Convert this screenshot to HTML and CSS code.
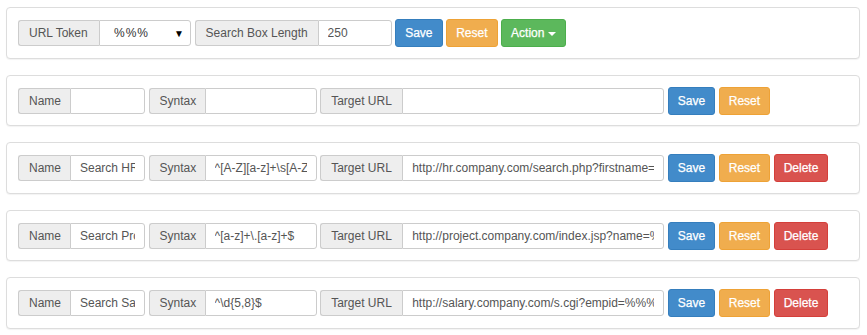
FILE: index.html
```html
<!DOCTYPE html>
<html>
<head>
<meta charset="utf-8">
<link rel="stylesheet" href="styles.css">
</head>
<body>
<div class="panel">
  <div class="row">
    <div class="group">
      <span class="addon w-token">URL Token</span>
      <div class="select"><span>%%%</span><span class="arrow">▼</span></div>
    </div>
    <div class="group">
      <span class="addon w-len">Search Box Length</span>
      <input class="field w-250" value="250">
    </div>
    <button class="btn save">Save</button>
    <button class="btn reset">Reset</button>
    <button class="btn action">Action <span class="caret"></span></button>
  </div>
</div>

<div class="panel">
  <div class="row">
    <div class="group"><span class="addon w-name">Name</span><input class="field w-nm" value=""></div>
    <div class="group"><span class="addon w-syn">Syntax</span><input class="field w-sx" value=""></div>
    <div class="group"><span class="addon w-url">Target URL</span><input class="field w-u" value=""></div>
    <button class="btn save">Save</button>
    <button class="btn reset">Reset</button>
  </div>
</div>

<div class="panel">
  <div class="row">
    <div class="group"><span class="addon w-name">Name</span><input class="field w-nm" value="Search HR"></div>
    <div class="group"><span class="addon w-syn">Syntax</span><input class="field w-sx" value="^[A-Z][a-z]+\s[A-Z][a-z]+$"></div>
    <div class="group"><span class="addon w-url">Target URL</span><input class="field w-u" value="http://hr.company.com/search.php?firstname=%%%"></div>
    <button class="btn save">Save</button>
    <button class="btn reset">Reset</button>
    <button class="btn delete">Delete</button>
  </div>
</div>

<div class="panel">
  <div class="row">
    <div class="group"><span class="addon w-name">Name</span><input class="field w-nm" value="Search Projects"></div>
    <div class="group"><span class="addon w-syn">Syntax</span><input class="field w-sx" value="^[a-z]+\.[a-z]+$"></div>
    <div class="group"><span class="addon w-url">Target URL</span><input class="field w-u" value="http://project.company.com/index.jsp?name=%%%"></div>
    <button class="btn save">Save</button>
    <button class="btn reset">Reset</button>
    <button class="btn delete">Delete</button>
  </div>
</div>

<div class="panel">
  <div class="row">
    <div class="group"><span class="addon w-name">Name</span><input class="field w-nm" value="Search Salary"></div>
    <div class="group"><span class="addon w-syn">Syntax</span><input class="field w-sx" value="^\d{5,8}$"></div>
    <div class="group"><span class="addon w-url">Target URL</span><input class="field w-u" value="http://salary.company.com/s.cgi?empid=%%%"></div>
    <button class="btn save">Save</button>
    <button class="btn reset">Reset</button>
    <button class="btn delete">Delete</button>
  </div>
</div>
</body>
</html>
```
FILE: styles.css
```css
* { box-sizing: border-box; }
html, body { background: #fff; }
body {
  margin: 0;
  padding: 7px 7px 0 6px;
  font-family: "Liberation Sans", Arial, sans-serif;
  font-size: 12px;
  color: #555;
}
.panel {
  border: 1px solid #ddd;
  border-radius: 4px;
  background: #fff;
  box-shadow: 0 1px 1px rgba(0,0,0,0.05);
  padding: 11px;
  height: 51.5px;
  margin-bottom: 16px;
}
.row {
  display: flex;
  align-items: center;
  gap: 3.6px;
  height: 28px;
}
.group {
  display: flex;
  height: 26px;
}
.addon {
  display: flex;
  align-items: center;
  padding: 0 10px;
  background: #eee;
  border: 1px solid #ccc;
  border-right: 0;
  border-radius: 3px 0 0 3px;
  color: #555;
  white-space: nowrap;
}
.field, .select {
  height: 26px;
  border: 1px solid #ccc;
  border-radius: 0 3px 3px 0;
  background: #fff;
  font-family: "Liberation Sans", Arial, sans-serif;
  font-size: 12px;
  color: #555;
  padding: 0 9px;
  margin: 0;
  outline: none;
}
.select {
  display: flex;
  align-items: center;
  justify-content: space-between;
  padding: 0 6px 0 14px;
  width: 92px;
  color: #333;
  letter-spacing: 1px;
}
.arrow { font-size: 10px; color: #000; letter-spacing: 0; }
.w-token { width: 81px; }
.w-len { width: 123px; }
.w-250 { width: 74px; }
.w-name { width: 52px; }
.w-nm { width: 75px; }
.w-syn { width: 56px; }
.w-sx { width: 112px; }
.w-url { width: 82px; }
.w-u { width: 262px; }
.btn {
  height: 28px;
  padding: 0 9px;
  border: 1px solid transparent;
  border-radius: 3px;
  font-family: "Liberation Sans", Arial, sans-serif;
  font-size: 12px;
  color: #fff;
  cursor: pointer;
  display: flex;
  align-items: center;
  gap: 4px;
  -webkit-text-stroke: 0.25px #fff;
}
.save { background: #428bca; border-color: #357ebd; }
.reset { background: #f0ad4e; border-color: #eea236; }
.action { background: #5cb85c; border-color: #4cae4c; }
.delete { background: #d9534f; border-color: #d43f3a; }
.caret {
  width: 0; height: 0;
  border-top: 4px solid #fff;
  border-left: 4px solid transparent;
  border-right: 4px solid transparent;
  margin-top: 1px;
}
```
